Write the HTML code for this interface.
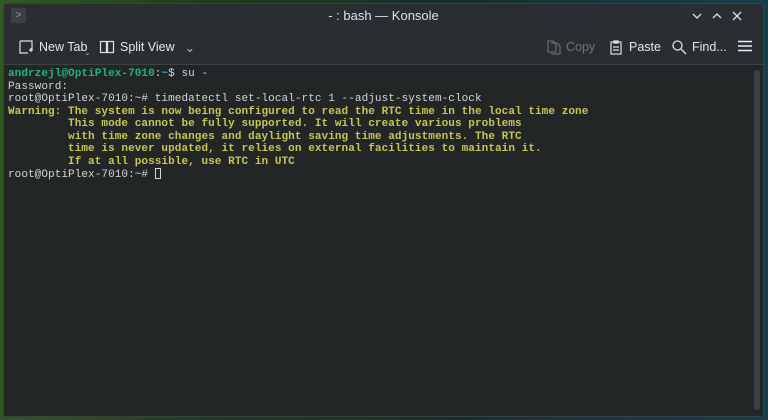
<!DOCTYPE html>
<html><head><meta charset="utf-8"><style>
*{margin:0;padding:0;box-sizing:border-box}
body{width:768px;height:420px;overflow:hidden;position:relative;font-family:"Liberation Sans",sans-serif;
background:linear-gradient(90deg,#2f5a22 0%,#1d3a1a 30%,#17302e 60%,#14404a 100%)}
#win{position:absolute;left:3px;top:3px;width:761px;height:414px;background:#232627;border:1px solid #3a3f44;border-radius:4px 4px 0 0;overflow:hidden}
#title{height:24px;background:#2a2e32;position:relative;color:#dfe1e3;font-size:13px;text-align:center;line-height:24px}
#tb{height:37px;background:#2a2e32;border-bottom:1px solid #3d4247;position:relative;color:#e6e8ea;font-size:12.5px}
.ti{position:absolute;top:11px;display:flex;align-items:center;gap:5px}
#term{position:absolute;top:61px;left:0;right:0;bottom:0;font-family:"Liberation Mono",monospace;font-size:11px;letter-spacing:0.07px;line-height:12.5px;color:#d3d5d6;padding:3px 0 0 4px;white-space:pre}
.g{color:#1fb37f;font-weight:bold}.b{color:#3a9ee0;font-weight:bold}.y{color:#c9c552;font-weight:bold}
#sb{position:absolute;right:3px;top:66px;width:6px;bottom:6px;background:#3b4045;border-radius:3px}
</style></head><body>
<div id="win">
<div id="title"><div style="position:absolute;left:7px;top:4px;width:15px;height:15px;background:#3b4045;border-radius:2px;color:#999;font-size:10px;line-height:15px">&gt;</div>- : bash — Konsole
<svg style="position:absolute;right:12px;top:6px" width="60" height="12" viewBox="0 0 60 12" fill="none" stroke="#dfe1e3" stroke-width="1.3"><path d="M2 4l4 4 4-4M22 8l4-4 4 4M42 2l8 8M50 2l-8 8"/></svg></div>
<div id="tb">
<div class="ti" style="left:14px"><svg width="16" height="16" fill="none" stroke="#dfe1e3" stroke-width="1.2"><path d="M2 2h12v8M2 2v12h8M11 11h4M13 9v4"/></svg>New Tab</div>
<div style="position:absolute;left:80px;top:20px;color:#aaa;font-size:8px">⌄</div>
<div class="ti" style="left:95px"><svg width="16" height="16" fill="none" stroke="#dfe1e3" stroke-width="1.2"><rect x="1.5" y="2.5" width="6" height="11"/><rect x="8.5" y="2.5" width="6" height="11"/></svg>Split View <span style="margin-left:5px;color:#bbb">⌄</span></div>
<div class="ti" style="left:541px;color:#6f7479"><svg width="16" height="16" fill="none" stroke="#6f7479" stroke-width="1.1"><path d="M3 2h5l3 3v8H3zM6 4h6l3 3v8H6"/></svg>Copy</div>
<div class="ti" style="left:604px"><svg width="16" height="16" fill="none" stroke="#dfe1e3" stroke-width="1.2"><rect x="3" y="3" width="10" height="12"/><path d="M6 2h4v2H6zM5 8h6M5 11h6"/></svg>Paste</div>
<div class="ti" style="left:667px"><svg width="16" height="16" fill="none" stroke="#dfe1e3" stroke-width="1.3"><circle cx="6.5" cy="6.5" r="4.5"/><path d="M10 10l5 5"/></svg>Find...</div>
<svg style="position:absolute;left:734px;top:12px" width="14" height="12" stroke="#eee" stroke-width="1.6"><path d="M0 1.5h14M0 6h14M0 10.5h14"/></svg>
</div>
<div id="term"><span class="g">andrzejl@OptiPlex-7010</span>:<span class="b">~</span>$ su -
Password:
root@OptiPlex-7010:~# timedatectl set-local-rtc 1 --adjust-system-clock
<span class="y">Warning: The system is now being configured to read the RTC time in the local time zone
         This mode cannot be fully supported. It will create various problems
         with time zone changes and daylight saving time adjustments. The RTC
         time is never updated, it relies on external facilities to maintain it.
         If at all possible, use RTC in UTC</span>
root@OptiPlex-7010:~# <span style="display:inline-block;width:6px;height:11px;border:1px solid #d3d5d6;vertical-align:-2px"></span></div>
<div id="sb"></div>
</div>
</body></html>
